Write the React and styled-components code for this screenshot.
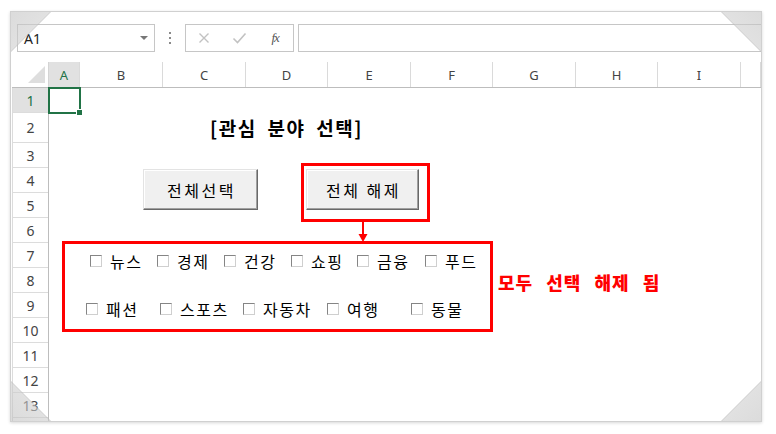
import React from 'react';
import styled, { createGlobalStyle } from 'styled-components';

const GlobalStyle = createGlobalStyle`
  html, body { margin: 0; padding: 0; background: #fff; }
  body { font-family: "Noto Sans", "Noto Sans CJK KR", sans-serif; }
`;

const KR = `"Noto Sans CJK KR", "Noto Sans", sans-serif`;
const UI = `"Noto Sans", "Open Sans", sans-serif`;

const Page = styled.div`
  width: 776px;
  height: 434px;
  padding: 11px 0 0 10px;
  box-sizing: border-box;
`;

const Frame = styled.div`
  position: relative;
  width: 752px;
  height: 411px;
  box-sizing: border-box;
  border: 1px solid #d0d0d0;
  box-shadow: 0 1px 3px rgba(0, 0, 0, 0.16);
  overflow: hidden;
  background: #fff;
`;

/* folded page corners */
const Corner = styled.div`
  position: absolute;
  width: 40px;
  height: 40px;
  pointer-events: none;
  ${({ $pos }) => ($pos.includes('t') ? 'top: 0;' : 'bottom: 0;')}
  ${({ $pos }) => ($pos.includes('l') ? 'left: 0;' : 'right: 0;')}
  background: ${({ $pos }) => {
    const dir = { tl: '135deg', tr: '225deg', bl: '45deg', br: '315deg' }[$pos];
    return `linear-gradient(${dir}, rgba(190,190,190,0.55) 0%, rgba(205,205,205,0.6) 48%, rgba(185,185,185,0.7) 49.5%, transparent 50.5%)`;
  }};
`;

/* formula bar */
const FormulaBar = styled.div`
  display: flex;
  align-items: center;
  height: 28px;
  margin-top: 12px;
  padding-left: 6px;
`;

const NameBox = styled.div`
  width: 138px;
  height: 28px;
  box-sizing: border-box;
  border: 1px solid #c6c6c6;
  display: flex;
  align-items: center;
  justify-content: space-between;
  padding: 0 6px 0 6px;
  font-family: ${UI};
  font-size: 14px;
  color: #222;
`;

const DropArrow = styled.span`
  width: 0;
  height: 0;
  border-left: 4px solid transparent;
  border-right: 4px solid transparent;
  border-top: 4px solid #777;
`;

const Dots = styled.div`
  display: flex;
  flex-direction: column;
  gap: 3px;
  margin: 0 14px 0 14px;
  & > span {
    width: 2px;
    height: 2px;
    background: #8a8a8a;
  }
`;

const FxGroup = styled.div`
  width: 109px;
  height: 28px;
  box-sizing: border-box;
  border: 1px solid #c6c6c6;
  display: grid;
  grid-template-columns: repeat(3, 1fr);
  align-items: center;
  justify-items: center;
`;

const FxLabel = styled.span`
  font-family: "Liberation Serif", serif;
  font-style: italic;
  font-size: 13px;
  color: #555;
  letter-spacing: -1px;
`;

const FormulaInput = styled.div`
  flex: 1;
  height: 28px;
  box-sizing: border-box;
  margin-left: 4px;
  border: 1px solid #c6c6c6;
  border-right: none;
`;

/* sheet grid */
const Sheet = styled.div`
  margin-top: 10px;
  padding-left: 1px;
`;

const HeaderRow = styled.div`
  display: flex;
  height: 26px;
  box-sizing: border-box;
  border-bottom: 1px solid #bdbdbd;
`;

const CornerCell = styled.div`
  position: relative;
  width: 37px;
  flex: none;
  box-sizing: border-box;
  border-right: 1px solid #d4d4d4;
  &::after {
    content: '';
    position: absolute;
    right: 3px;
    bottom: 4px;
    width: 0;
    height: 0;
    border-left: 17px solid transparent;
    border-bottom: 17px solid #dedede;
  }
`;

const ColHead = styled.div`
  width: ${({ $w }) => $w}px;
  flex: ${({ $w }) => ($w ? 'none' : '1')};
  box-sizing: border-box;
  border-right: 1px solid #dadada;
  display: flex;
  align-items: center;
  justify-content: center;
  font-family: ${UI};
  font-size: 13px;
  color: ${({ $active }) => ($active ? '#217346' : '#444')};
  background: ${({ $active }) => ($active ? '#e1e1e1' : '#fff')};
`;

const Body = styled.div`
  display: flex;
  height: 340px;
`;

const RowHeads = styled.div`
  width: 37px;
  flex: none;
  box-sizing: border-box;
  border-right: 1px solid #bdbdbd;
  border-left: 1px solid #dcdcdc;
`;

const RowHead = styled.div`
  height: ${({ $h }) => $h}px;
  box-sizing: border-box;
  border-bottom: 1px solid #dcdcdc;
  display: flex;
  align-items: center;
  justify-content: center;
  font-family: ${UI};
  font-size: 14px;
  color: ${({ $active }) => ($active ? '#217346' : '#444')};
  background: ${({ $active }) => ($active ? '#e1e1e1' : '#fff')};
`;

const Cells = styled.div`
  flex: 1;
  background: #fff;
`;

/* objects floating over the worksheet */
const Floating = styled.div`
  position: absolute;
  left: ${({ $x }) => $x - 11}px;
  top: ${({ $y }) => $y - 12}px;
`;

const Selection = styled(Floating)`
  width: 33px;
  height: 27px;
  box-sizing: border-box;
  border: 2px solid #217346;
  &::after {
    content: '';
    position: absolute;
    right: -4px;
    bottom: -4px;
    width: 5px;
    height: 5px;
    background: #217346;
    border: 1px solid #fff;
  }
`;

const Title = styled(Floating)`
  font-family: ${KR};
  font-weight: 700;
  font-size: 19px;
  line-height: 24px;
  color: #000;
  white-space: nowrap;
  letter-spacing: 1.5px;
  word-spacing: 5px;
`;

const SheetButton = styled(Floating).attrs({ as: 'button' })`
  width: ${({ $w }) => $w}px;
  height: 41px;
  box-sizing: border-box;
  padding: 0 0 0 2px;
  background: #f0f0f0;
  border: 1px solid;
  border-color: #e3e3e3 #696969 #696969 #e3e3e3;
  box-shadow: inset -1px -1px 0 #a0a0a0, inset 1px 1px 0 #fff;
  font-family: ${KR};
  font-size: 16px;
  letter-spacing: 2.5px;
  color: #000;
  white-space: nowrap;
`;

const RedFrame = styled(Floating)`
  width: ${({ $w }) => $w}px;
  height: ${({ $h }) => $h}px;
  box-sizing: border-box;
  border: 3px solid #ff0000;
`;

const CheckGroup = styled(RedFrame)`
  display: flex;
  flex-direction: column;
  gap: 26px;
  padding-top: 6px;
`;

const CheckRow = styled.div`
  display: flex;
  align-items: center;
  height: 22px;
  padding-left: ${({ $indent }) => $indent}px;
`;

const CheckItem = styled.label`
  width: ${({ $w }) => $w}px;
  flex: none;
  display: flex;
  align-items: center;
  gap: 8px;
  font-family: ${KR};
  font-size: 16px;
  letter-spacing: 1.5px;
  color: #000;
  white-space: nowrap;
`;

const Box = styled.span`
  width: 12px;
  height: 12px;
  box-sizing: border-box;
  flex: none;
  background: #fff;
  border: 1px solid;
  border-color: #858585 #cfcfcf #cfcfcf #858585;
`;

const Note = styled(Floating)`
  font-family: ${KR};
  font-weight: 900;
  font-size: 18px;
  line-height: 24px;
  color: #ff0000;
  white-space: nowrap;
  word-spacing: 8px;
  letter-spacing: 1px;
`;

const columns = [
  { name: 'A', w: 31, active: true },
  { name: 'B', w: 83 },
  { name: 'C', w: 83 },
  { name: 'D', w: 82 },
  { name: 'E', w: 83 },
  { name: 'F', w: 82 },
  { name: 'G', w: 83 },
  { name: 'H', w: 82 },
  { name: 'I', w: 83 },
  { name: '', w: 0 },
];

const rowHeights = [25, 30, 25, 25, 25, 25, 25, 25, 25, 25, 25, 25, 25];

const firstRow = [
  ['뉴스', 67],
  ['경제', 67],
  ['건강', 67],
  ['쇼핑', 66],
  ['금융', 68],
  ['푸드', 60],
];

const secondRow = [
  ['패션', 74],
  ['스포츠', 83],
  ['자동차', 84],
  ['여행', 84],
  ['동물', 60],
];

export default function App() {
  return (
    <>
      <GlobalStyle />
      <Page>
        <Frame>
          <FormulaBar>
            <NameBox>
              <span>A1</span>
              <DropArrow />
            </NameBox>
            <Dots>
              <span />
              <span />
              <span />
            </Dots>
            <FxGroup>
              <svg width="12" height="12" viewBox="0 0 12 12">
                <path d="M1.5 1.5 L10.5 10.5 M10.5 1.5 L1.5 10.5" stroke="#c2c2c2" strokeWidth="1.4" fill="none" />
              </svg>
              <svg width="15" height="12" viewBox="0 0 15 12">
                <path d="M1.5 6.5 L5.5 10.5 L13.5 1.5" stroke="#c2c2c2" strokeWidth="1.6" fill="none" />
              </svg>
              <FxLabel>fx</FxLabel>
            </FxGroup>
            <FormulaInput />
          </FormulaBar>

          <Sheet>
            <HeaderRow>
              <CornerCell />
              {columns.map((c, i) => (
                <ColHead key={i} $w={c.w} $active={c.active}>
                  {c.name}
                </ColHead>
              ))}
            </HeaderRow>
            <Body>
              <RowHeads>
                {rowHeights.map((h, i) => (
                  <RowHead key={i} $h={h} $active={i === 0}>
                    {i + 1}
                  </RowHead>
                ))}
              </RowHeads>
              <Cells />
            </Body>
          </Sheet>

          <Selection $x={48} $y={87} />

          <Title $x={210} $y={116}>[관심 분야 선택]</Title>

          <SheetButton $x={143} $y={169} $w={115}>전체선택</SheetButton>
          <SheetButton $x={306} $y={169} $w={113}>전체 해제</SheetButton>

          <RedFrame $x={301} $y={163} $w={129} $h={59} />
          <Floating $x={357} $y={221}>
            <svg width="12" height="22" viewBox="0 0 12 22">
              <path d="M6 0 V15" stroke="#ff0000" strokeWidth="2" />
              <path d="M1.5 13 L10.5 13 L6 21 Z" fill="#ff0000" />
            </svg>
          </Floating>

          <CheckGroup $x={62} $y={241} $w={431} $h={91}>
            <CheckRow $indent={25}>
              {firstRow.map(([label, w]) => (
                <CheckItem key={label} $w={w}>
                  <Box />
                  {label}
                </CheckItem>
              ))}
            </CheckRow>
            <CheckRow $indent={21}>
              {secondRow.map(([label, w]) => (
                <CheckItem key={label} $w={w}>
                  <Box />
                  {label}
                </CheckItem>
              ))}
            </CheckRow>
          </CheckGroup>

          <Note $x={498} $y={270}>모두 선택 해제 됨</Note>

          <Corner $pos="tl" />
          <Corner $pos="tr" />
          <Corner $pos="bl" />
          <Corner $pos="br" />
        </Frame>
      </Page>
    </>
  );
}
